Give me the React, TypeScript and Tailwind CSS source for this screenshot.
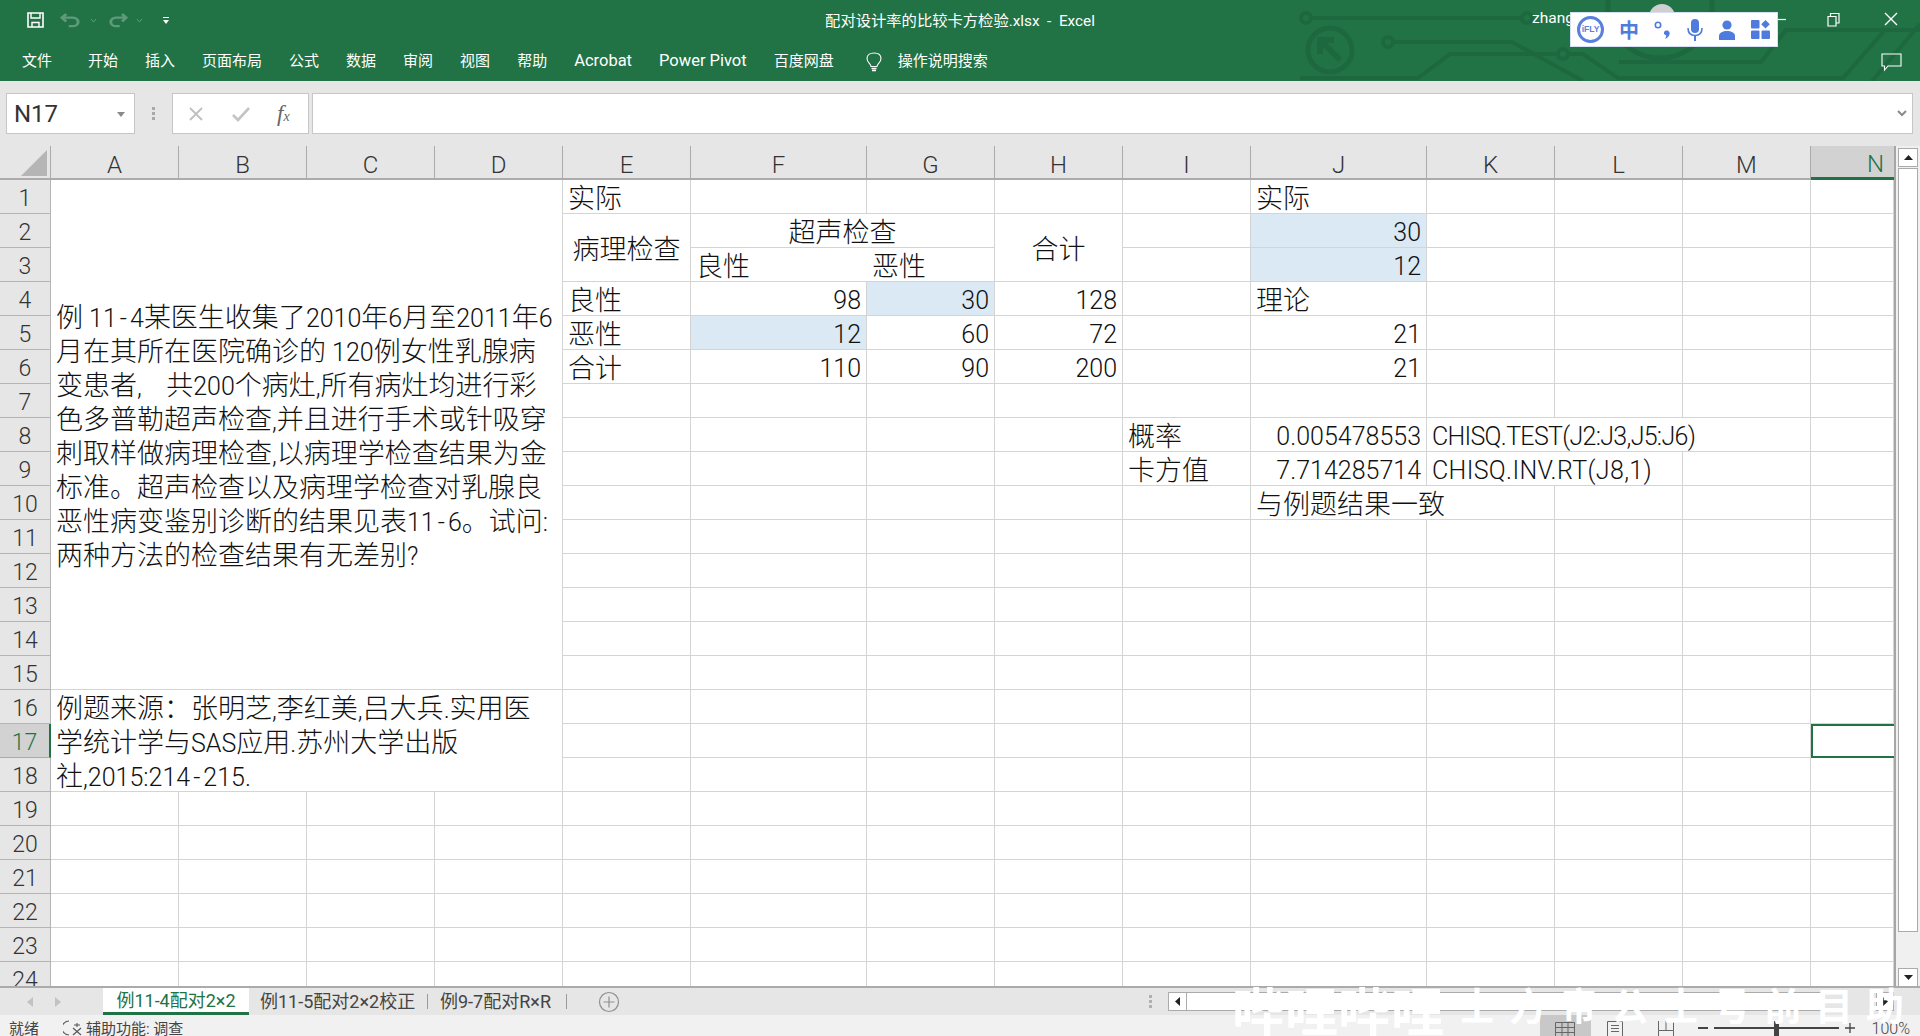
import React from "react";

const COLS = ["A", "B", "C", "D", "E", "F", "G", "H", "I", "J", "K", "L", "M", "N"];
const GRID =
  "grid grid-cols-[51px_128px_128px_128px_128px_128px_176px_128px_128px_128px_176px_128px_128px_128px_83px] auto-rows-[34px]";
const FONT = "font-[Roboto,'Noto_Sans_CJK_SC',sans-serif]";
const BLUE = "bg-[#dbe9f5]";
const LINE = "border-r border-b border-[#d4d4d4]";

// latin runs go a bit smaller than the CJK so the digits get the narrow look of the original font
function Mix({ text }: { text: string }) {
  const parts = text.split(/([\x20-\x7e×]+)/);
  return (
    <>
      {parts.map((p, i) =>
        i % 2 === 1 ? (
          <span key={i} className="text-[25px]">
            {p.split("-").map((seg, j) => (
              <React.Fragment key={j}>
                {j > 0 ? <span className="px-[3px]">-</span> : null}
                {seg}
              </React.Fragment>
            ))}
          </span>
        ) : (
          <span key={i}>{p}</span>
        )
      )}
    </>
  );
}

interface ICell {
  text?: string;
  className?: string;
  noLine?: boolean;
}

const cells: Record<string, ICell> = {
  E1: { text: "实际" },
  E2: { text: "病理检查", className: "row-span-2 justify-center" },
  F2: { text: "超声检查", className: "col-span-2 justify-center" },
  H2: { text: "合计", className: "row-span-2 justify-center" },
  F3: { text: "良性", className: "border-r-0" },
  G3: { text: "恶性" },
  E4: { text: "良性" },
  F4: { text: "98", className: "justify-end" },
  G4: { text: "30", className: `justify-end ${BLUE}` },
  H4: { text: "128", className: "justify-end" },
  E5: { text: "恶性" },
  F5: { text: "12", className: `justify-end ${BLUE}` },
  G5: { text: "60", className: "justify-end" },
  H5: { text: "72", className: "justify-end" },
  E6: { text: "合计" },
  F6: { text: "110", className: "justify-end" },
  G6: { text: "90", className: "justify-end" },
  H6: { text: "200", className: "justify-end" },
  J1: { text: "实际" },
  J2: { text: "30", className: `justify-end ${BLUE}` },
  J3: { text: "12", className: `justify-end ${BLUE}` },
  J4: { text: "理论" },
  J5: { text: "21", className: "justify-end" },
  J6: { text: "21", className: "justify-end" },
  I8: { text: "概率" },
  I9: { text: "卡方值" },
  J8: { text: "0.005478553", className: "justify-end" },
  J9: { text: "7.714285714", className: "justify-end" },
  K8: { text: "CHISQ.TEST(J2:J3,J5:J6)", className: "col-span-3 tracking-[-0.7px]" },
  K9: { text: "CHISQ.INV.RT(J8,1)", className: "col-span-2 tracking-[0.35px]" },
  J10: { text: "与例题结果一致", className: "col-span-2" },
  N17: { noLine: true, className: "border-y-2 border-l-2 border-[#217346]" },
};

// cells that sit under a merge, they are not rendered at all
const covered = new Set<string>(["E3", "H3", "G2", "L8", "M8", "L9", "K10"]);
for (let r = 1; r <= 18; r++) {
  for (const c of ["A", "B", "C", "D"]) covered.add(c + r);
}

const problem = [
  "例 11-4某医生收集了2010年6月至2011年6",
  "月在其所在医院确诊的 120例女性乳腺病",
  "变患者,    共200个病灶,所有病灶均进行彩",
  "色多普勒超声检查,并且进行手术或针吸穿",
  "刺取样做病理检查,以病理学检查结果为金",
  "标准。超声检查以及病理学检查对乳腺良",
  "恶性病变鉴别诊断的结果见表11-6。试问:",
  "两种方法的检查结果有无差别?",
];

const source = ["例题来源：张明芝,李红美,吕大兵.实用医", "学统计学与SAS应用.苏州大学出版", "社,2015:214-215."];

function RowHead({ n }: { n: number }) {
  const active = n === 17;
  return (
    <div
      className={`flex items-center justify-center border-b border-r pt-[5px] text-[23px] font-light ${
        active
          ? "bg-[#d2d2d2] text-[#217346] border-b-[#ababab] border-r-2 border-r-[#217346]"
          : "bg-[#e6e6e6] text-[#333333] border-[#b4b4b4]"
      }`}
    >
      {n}
    </div>
  );
}

function Merged({ lines, className }: { lines: string[]; className: string }) {
  return (
    <div
      className={`${className} flex flex-col justify-center ${LINE} pl-[5px] pt-[4px] text-[27px] leading-[34px] whitespace-pre`}
    >
      {lines.map((l) => (
        <div key={l} className="h-[34px]">
          <Mix text={l} />
        </div>
      ))}
    </div>
  );
}

function Sheet() {
  const out: React.ReactNode[] = [];
  for (let r = 1; r <= 24; r++) {
    out.push(<RowHead key={`h${r}`} n={r} />);
    if (r === 1) out.push(<Merged key="A1" lines={problem} className="col-span-4 row-span-15" />);
    if (r === 16) out.push(<Merged key="A16" lines={source} className="col-span-4 row-span-3" />);
    for (const c of COLS) {
      const id = c + r;
      if (covered.has(id)) continue;
      const cell = cells[id];
      out.push(
        <div
          key={id}
          className={`flex items-center min-w-0 whitespace-nowrap px-[5px] pt-[5px] text-[27px] ${
            cell?.noLine ? "" : LINE
          } ${cell?.className ?? ""}`}
        >
          {cell?.text ? <Mix text={cell.text} /> : null}
        </div>
      );
    }
  }
  return <div className={`${GRID} font-light text-[#111111]`}>{out}</div>;
}

function Ribbon() {
  return (
    <div className="relative h-[81px] bg-[#217346] text-white overflow-hidden">
      <svg className="absolute left-0 top-0" width="1920" height="81" fill="none" stroke="#1e6840" strokeWidth="4">
        <circle cx="1306" cy="18" r="5" />
        <path d="M1311 18H1522" />
        <circle cx="1527" cy="18" r="5" />
        <circle cx="1330" cy="50" r="22" strokeWidth="5" />
        <path d="M1340 60L1322 42M1320 54V40H1334" strokeWidth="6" />
        <circle cx="1388" cy="42" r="5" />
        <path d="M1393 42H1512L1583 81" />
        <path d="M1300 78H1418L1450 54H1558" />
        <circle cx="1563" cy="54" r="5" />
        <path d="M1568 54H1583L1618 78H1843L1885 30" />
        <path d="M1619 62H1761L1786 30H1920" />
        <path d="M1872 81L1920 24" />
        <circle cx="1660" cy="6" r="52" strokeWidth="5" />
      </svg>

      <div className="relative grid grid-cols-[1fr_auto_1fr] h-[40px] items-center">
        <div className="flex items-center pl-[27px]">
          <svg width="17" height="16" viewBox="0 0 17 16" fill="none" stroke="#ffffff" strokeWidth="1.6">
            <path d="M1 1H16V15H1Z" />
            <path d="M4 1V6H13V1M5 15V10.5H12V15" strokeWidth="1.4" />
          </svg>
          <svg className="ml-[16px]" width="20" height="15" viewBox="0 0 16 16" preserveAspectRatio="none" fill="none" stroke="#5f9a7b" strokeWidth="2.4">
            <path d="M5 1L1.5 5L5 9M2 5H10C13 5 14.5 7.5 14.5 9.5C14.5 12 12.5 14 10 14H7" />
          </svg>
          <svg className="ml-[10px]" width="7" height="5" viewBox="0 0 7 5" fill="none" stroke="#5f9a7b" strokeWidth="1">
            <path d="M1 1L3.5 4L6 1" />
          </svg>
          <svg className="ml-[12px]" width="19" height="15" viewBox="0 0 16 16" preserveAspectRatio="none" fill="none" stroke="#5f9a7b" strokeWidth="2.4">
            <path d="M11 1L14.5 5L11 9M14 5H6C3 5 1.5 7.5 1.5 9.5C1.5 12 3.5 14 6 14H9" />
          </svg>
          <svg className="ml-[8px]" width="7" height="5" viewBox="0 0 7 5" fill="none" stroke="#5f9a7b" strokeWidth="1">
            <path d="M1 1L3.5 4L6 1" />
          </svg>
          <svg className="ml-[20px]" width="6" height="7" viewBox="0 0 6 7" fill="#ffffff">
            <path d="M0 0H6V1H0ZM0 3H6L3 7Z" />
          </svg>
        </div>
        <div className="pt-[2px] text-[15.3px] whitespace-pre">配对设计率的比较卡方检验.xlsx  -  Excel</div>
        <div className="flex items-center justify-end">
          <span className="mr-[346px] text-[15.5px] -translate-y-[1px]">zhang</span>
        </div>
      </div>

      {/* window buttons */}
      <svg className="absolute left-[1776px] top-[10px]" width="130" height="20" fill="none" stroke="#ffffff" strokeWidth="1.2">
        <path d="M0 9.5H10" />
        <path d="M52 6.5H60V16H52ZM54.5 6.5V3.5H63V13H60" />
        <path d="M109 3L121 15M121 3L109 15" strokeWidth="1.4" />
      </svg>
      <svg className="absolute left-[1881px] top-[53px]" width="21" height="19" fill="none" stroke="#ffffff" strokeWidth="1.1">
        <path d="M1 1H20V13H7L3.5 17V13H1Z" />
      </svg>

      <div className="relative flex items-center gap-[27px] pl-[22px] pt-[2px] h-[41px] text-[15px] whitespace-nowrap">
        <span className="mr-[9px]">文件</span>
        <span>开始</span>
        <span>插入</span>
        <span>页面布局</span>
        <span>公式</span>
        <span>数据</span>
        <span>审阅</span>
        <span>视图</span>
        <span>帮助</span>
        <span className="text-[16.5px]">Acrobat</span>
        <span className="text-[16.5px]">Power Pivot</span>
        <span>百度网盘</span>
        <div className="flex items-center gap-[16px] ml-[5px]">
          <svg width="16" height="20" viewBox="0 0 16 20" fill="none" stroke="#ffffff" strokeWidth="1.1">
            <path d="M5 14.5C5 12 1 10.5 1 6.5C1 3 4 1 8 1C12 1 15 3 15 6.5C15 10.5 11 12 11 14.5Z" />
            <path d="M5.5 16.5H10.5M6 18.5H10" strokeWidth="1.5" />
          </svg>
          <span>操作说明搜索</span>
        </div>
      </div>
    </div>
  );
}

function IflyBar() {
  return (
    <>
      <div className="absolute left-[1649px] top-[4px] h-[30px] w-[26px] rounded-full bg-[#cfcfcf]" />
      <div className="absolute left-[1570px] top-[12px] flex h-[35px] w-[208px] items-center gap-[15px] bg-white pl-[6px] border border-[#d5e0f5]">
        <div className="flex h-[27px] w-[27px] items-center justify-center rounded-full border-[3px] border-[#5a7fdc] text-[8.5px] font-bold text-[#5a7fdc] font-['Liberation_Sans',sans-serif]">
          iFLY
        </div>
        <span className="w-[20px] text-[20px] font-bold leading-none text-[#4f7cdc] font-['Noto_Sans_CJK_SC',sans-serif]">
          中
        </span>
        <svg width="18" height="22" viewBox="0 0 18 22" fill="#4f7cdc">
          <circle cx="4" cy="6" r="2.7" fill="none" stroke="#4f7cdc" strokeWidth="1.6" />
          <path d="M11 12C13.5 10.5 16.5 12.5 15.5 15.5C14.8 17.5 13 19 11 20C12 18 12.5 17 12 16C10 16 9 13.5 11 12Z" />
        </svg>
        <svg width="16" height="22" viewBox="0 0 16 22" fill="#4f7cdc">
          <rect x="4" y="0" width="8" height="14" rx="4" />
          <path d="M1 9C1 14 4 16.5 8 16.5C12 16.5 15 14 15 9" fill="none" stroke="#4f7cdc" strokeWidth="1.6" />
          <path d="M7 16H9V22H7Z" />
        </svg>
        <svg width="18" height="20" viewBox="0 0 18 20" fill="#4f7cdc">
          <circle cx="9" cy="5" r="4.6" />
          <path d="M1 20V16C1 12.5 5 11 9 11C13 11 17 12.5 17 16V20Z" />
        </svg>
        <svg width="19" height="19" viewBox="0 0 19 19" fill="#4f7cdc">
          <rect x="0" y="0" width="8.5" height="8.5" rx="1" />
          <path d="M14.5 0L18.8 4.3L14.5 8.6L10.2 4.3Z" />
          <rect x="0" y="10.5" width="8.5" height="8.5" rx="1" />
          <rect x="10.5" y="10.5" width="8.5" height="8.5" rx="1" />
        </svg>
      </div>
    </>
  );
}

function FormulaBar() {
  return (
    <div className="flex h-[65px] bg-[#e6e6e6] pt-[12px] pl-[6px] pb-[12px]">
      <div className="flex w-[129px] items-center justify-between border border-[#c6c6c6] bg-white pl-[7px] pr-[9px] pt-[1px] text-[24px] text-[#333333]">
        N17
        <svg width="8" height="5" fill="#8a8a8a">
          <path d="M0 0H8L4 5Z" />
        </svg>
      </div>
      <div className="flex w-[37px] flex-col items-center justify-center gap-[2px]">
        <div className="h-[3px] w-[3px] bg-[#a8a8a8]" />
        <div className="h-[3px] w-[3px] bg-[#a8a8a8]" />
        <div className="h-[3px] w-[3px] bg-[#a8a8a8]" />
      </div>
      <div className="flex w-[137px] items-center border border-[#c6c6c6] bg-white pl-[16px]">
        <svg width="14" height="14" fill="none" stroke="#c0c0c0" strokeWidth="1.8">
          <path d="M1 1L13 13M13 1L1 13" />
        </svg>
        <svg className="ml-[29px]" width="18" height="16" fill="none" stroke="#c4c4c4" strokeWidth="2.6">
          <path d="M1 9L6 14L17 2" />
        </svg>
        <span className="ml-[27px] text-[23px] italic leading-none text-[#666666] font-['Liberation_Serif',serif]">
          f<span className="text-[14px]">x</span>
        </span>
      </div>
      <div className="ml-[3px] flex w-[1601px] items-center justify-end border border-[#c6c6c6] bg-white pr-[5px]">
        <svg width="10" height="7" fill="none" stroke="#8a8a8a" strokeWidth="2">
          <path d="M1 1L5 5L9 1" />
        </svg>
      </div>
    </div>
  );
}

function ColumnHeader() {
  return (
    <div className={`${GRID} bg-[#e6e6e6] text-[#333333]`}>
      <div className="relative border-r border-b-2 border-r-[#ababab] border-b-[#ababab]">
        <svg className="absolute left-[21px] top-[4px]" width="26" height="26" fill="#b5b5b5">
          <path d="M26 0V26H0Z" />
        </svg>
      </div>
      {COLS.map((c) =>
        c === "N" ? (
          <div
            key={c}
            className="flex items-center justify-end overflow-hidden border-b-[3px] border-b-[#217346] bg-[#d2d2d2] pr-[10px] pt-[5px] text-[24px] font-light text-[#217346]"
          >
            {c}
          </div>
        ) : (
          <div
            key={c}
            className="flex items-center justify-center border-r border-b-2 border-r-[#ababab] border-b-[#ababab] pt-[5px] text-[24px] font-light"
          >
            {c}
          </div>
        )
      )}
    </div>
  );
}

function VScroll() {
  return (
    <div className="flex w-[26px] flex-col items-start border-l-2 border-[#a6a6a6] bg-[#f0f0f0] pl-[2px] pt-[2px]">
      <div className="flex h-[19px] w-[20px] items-center justify-center border border-[#ababab] bg-white">
        <svg width="9" height="5" fill="#222222">
          <path d="M4.5 0L9 5H0Z" />
        </svg>
      </div>
      <div className="mt-[1px] h-[764px] w-[20px] border border-[#ababab] bg-white" />
      <div className="mt-[36px] flex h-[18px] w-[20px] items-center justify-center border border-b-0 border-[#ababab] bg-white">
        <svg width="9" height="5" fill="#222222">
          <path d="M0 0H9L4.5 5Z" />
        </svg>
      </div>
    </div>
  );
}

function SheetTabs() {
  return (
    <div className="flex h-[29px] items-stretch border-t-2 border-[#ababab] bg-[#e6e6e6] text-[18px] text-[#444444] whitespace-nowrap">
      <div className="flex w-[103px] items-center gap-[22px] pl-[27px]">
        <svg width="6" height="10" fill="#c2c2c2">
          <path d="M6 0V10L0 5Z" />
        </svg>
        <svg width="6" height="10" fill="#c2c2c2">
          <path d="M0 0V10L6 5Z" />
        </svg>
      </div>
      <div className="flex w-[146px] items-center justify-center border-b-[3px] border-[#217346] bg-white text-[#217346]">
        例11-4配对2×2
      </div>
      <div className="flex w-[166px] items-center pl-[11px]">例11-5配对2×2校正</div>
      <div className="ml-[12px] my-[6px] w-px bg-[#9a9a9a]" />
      <div className="flex w-[125px] items-center pl-[12px]">例9-7配对R×R</div>
      <div className="ml-[13px] my-[6px] w-px bg-[#9a9a9a]" />
      <div className="ml-[31px] flex items-center">
        <svg width="22" height="22" fill="none" stroke="#8f8f8f" strokeWidth="1.2">
          <circle cx="11" cy="11" r="9.5" />
          <path d="M11 5.5V16.5M5.5 11H16.5" />
        </svg>
      </div>
      <div className="ml-[529px] flex w-[3px] flex-col justify-center gap-[2px]">
        <div className="h-[3px] w-[3px] bg-[#b0b0b0]" />
        <div className="h-[3px] w-[3px] bg-[#b0b0b0]" />
        <div className="h-[3px] w-[3px] bg-[#b0b0b0]" />
      </div>
      <div className="ml-[16px] flex h-[19px] w-[726px] self-center">
        <div className="flex w-[19px] items-center justify-center border border-[#ababab] bg-white">
          <svg width="5" height="9" fill="#222222">
            <path d="M5 0V9L0 4.5Z" />
          </svg>
        </div>
        <div className="w-[636px] border-y border-[#ababab] bg-white" />
        <div className="flex-1" />
        <div className="flex w-[18px] items-center justify-center border border-[#ababab] bg-white">
          <svg width="5" height="9" fill="#222222">
            <path d="M0 0V9L5 4.5Z" />
          </svg>
        </div>
      </div>
    </div>
  );
}

function StatusBar() {
  return (
    <div className="flex h-[21px] items-start bg-[#f1f1f1] text-[15px] leading-[20px] text-[#444444] whitespace-nowrap overflow-hidden">
      <span className="ml-[9px] mt-[4px]">就绪</span>
      <svg className="ml-[24px] mt-[5px]" width="20" height="16" fill="none" stroke="#555555" strokeWidth="1.1">
        <path d="M6 1A7 7 0 0 0 6 15" />
        <path d="M11 5H17M14 3V7M10 8L18 15M18 8L10 15" />
      </svg>
      <span className="ml-[3px] mt-[4px]">辅助功能: 调查</span>

      <div className="ml-auto flex items-start pr-[10px]">
        <div className="flex h-[21px] w-[51px] justify-center bg-[#c8c8c8] pt-[7px]">
          <svg width="20" height="14" fill="none" stroke="#666666">
            <path d="M.5 .5H19.5V14M.5 .5V14M7 .5V14M13 .5V14M.5 5.5H19.5M.5 10.5H19.5" />
          </svg>
        </div>
        <svg className="ml-[16px] mt-[6px]" width="16" height="15" fill="none" stroke="#666666">
          <path d="M.5 .5H15.5V15M.5 .5V15M4 4.5H12M4 7.5H12M4 10.5H12" />
        </svg>
        <svg className="ml-[35px] mt-[6px]" width="16" height="15" fill="none" stroke="#666666">
          <path d="M.5 0V9.5H15.5V0M8 0V9.5M.5 9.5V15M15.5 9.5V15" />
        </svg>
        <div className="ml-[24px] mt-[12px] h-[1.5px] w-[10px] bg-[#444444]" />
        <div className="relative ml-[6px] mt-[12px] h-[1.5px] w-[125px] bg-[#444444]">
          <div className="absolute left-[60px] -top-[6px] h-[16px] w-[5px] bg-[#444444]" />
        </div>
        <svg className="ml-[6px] mt-[8px]" width="10" height="10" fill="none" stroke="#444444" strokeWidth="1.3">
          <path d="M5 0V10M0 5H10" />
        </svg>
        <span className="ml-[17px] mt-[4px] text-[16px] font-light">100%</span>
      </div>
    </div>
  );
}

export default function App() {
  return (
    <div className={`relative flex h-[1036px] w-[1920px] flex-col overflow-hidden bg-white ${FONT}`}>
      <Ribbon />
      <IflyBar />
      <FormulaBar />
      <div className="flex h-[840px] overflow-hidden">
        <div className="w-[1894px] overflow-hidden">
          <ColumnHeader />
          <Sheet />
        </div>
        <VScroll />
      </div>
      <SheetTabs />
      <StatusBar />
      {/* big white caption burnt into the video, only its top part is on screen */}
      <div className="absolute left-[1232px] top-[983px] flex items-start whitespace-nowrap font-bold leading-none text-white font-['Noto_Sans_CJK_SC',sans-serif]">
        <span className="text-[53px]">哔哩哔哩</span>
        <span className="ml-[14px] mt-[2px] text-[38px] tracking-[13px]">士方帝公士号前目助</span>
      </div>
    </div>
  );
}
